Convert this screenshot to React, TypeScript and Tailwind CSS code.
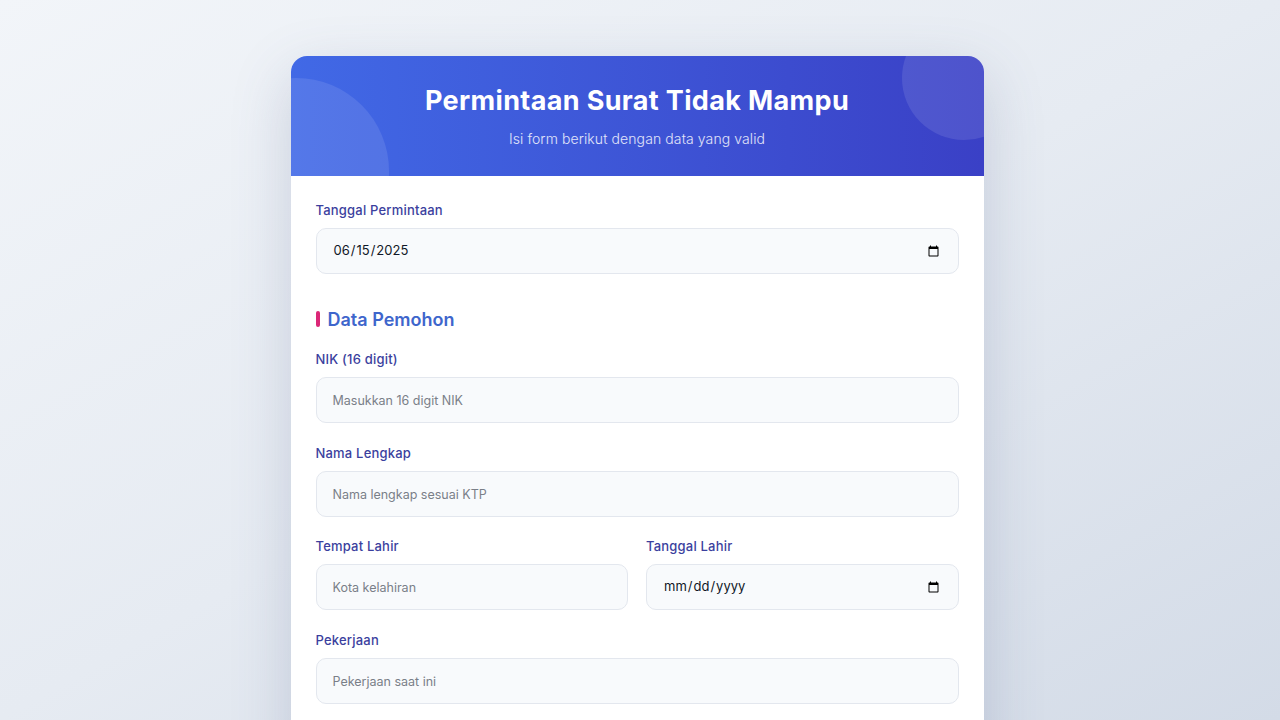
import React from "react";

const font = { fontFamily: "Inter, 'Noto Sans', sans-serif" };

function Label({ children }: { children: React.ReactNode }) {
  return <label className="block mb-2 text-[13px] leading-5 font-medium tracking-[0.2px] text-[#3b3f9e]">{children}</label>;
}

const inputCls =
  "block w-full h-[46px] px-4 rounded-[10px] border border-[#e3e7ee] bg-[#f8fafc] text-[13px] text-[#111827] placeholder:text-[12.5px] placeholder:text-[#7a7f88] outline-none";

export default function App() {
  return (
    <div
      className="h-[720px] w-full overflow-hidden bg-gradient-to-br from-[#f2f5f9] via-[#e6ebf2] to-[#d3dbe7] flex justify-center pt-14 pr-[6px]"
      style={font}
    >
      <div className="w-[693px] h-[720px] shrink-0 rounded-t-[16px] bg-white shadow-[0_20px_60px_rgba(71,85,130,0.22)] overflow-hidden">
        <div className="relative h-[120px] overflow-hidden bg-gradient-to-r from-[#4169e6] to-[#3a40c6] flex flex-col items-center justify-center">
          <div className="absolute -left-[88px] top-[22px] w-[186px] h-[186px] rounded-full bg-white/10" />
          <div className="absolute left-[611px] -top-[40px] w-[124px] h-[124px] rounded-full bg-white/10" />
          <h1 className="relative text-[27px] leading-9 font-bold text-white tracking-[0.35px]">
            Permintaan Surat Tidak Mampu
          </h1>
          <p className="relative mt-[10px] text-[14px] leading-5 text-white/85 font-light tracking-[0.1px]">
            Isi form berikut dengan data yang valid
          </p>
        </div>
        <div className="px-[25px] pt-6">
          <div className="mb-5">
            <Label>Tanggal Permintaan</Label>
            <input type="date" defaultValue="2025-06-15" className={inputCls} />
          </div>
          <div className="mt-[31px] mb-4 flex items-center gap-2 h-7">
            <span className="w-1 h-4 rounded-full bg-[#db2777]" />
            <h2 className="text-[18px] font-semibold text-[#3e66cc]">Data Pemohon</h2>
          </div>
          <div className="mb-5">
            <Label>NIK (16 digit)</Label>
            <input type="text" placeholder="Masukkan 16 digit NIK" className={inputCls} />
          </div>
          <div className="mb-[19px]">
            <Label>Nama Lengkap</Label>
            <input type="text" placeholder="Nama lengkap sesuai KTP" className={inputCls} />
          </div>
          <div className="mb-5 grid grid-cols-2 gap-[18px]">
            <div>
              <Label>Tempat Lahir</Label>
              <input type="text" placeholder="Kota kelahiran" className={inputCls} />
            </div>
            <div>
              <Label>Tanggal Lahir</Label>
              <input type="date" className={inputCls} />
            </div>
          </div>
          <div className="mb-5">
            <Label>Pekerjaan</Label>
            <input type="text" placeholder="Pekerjaan saat ini" className={inputCls} />
          </div>
        </div>
      </div>
    </div>
  );
}
